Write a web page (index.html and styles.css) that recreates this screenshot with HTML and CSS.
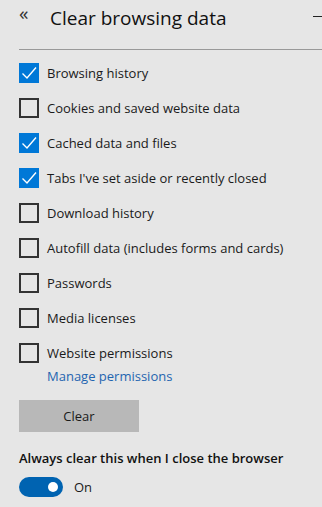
FILE: index.html
```html
<!DOCTYPE html>
<html>
<head>
<meta charset="utf-8">
<link rel="stylesheet" href="styles.css">
</head>
<body>
<div class="panel">
  <div class="header">
    <span class="back">«</span>
    <h1 class="title">Clear browsing data</h1>
    <span class="dash"></span>
  </div>
  <div class="list">
    <div class="row"><span class="box checked"><svg viewBox="0 0 20 20" width="20" height="20"><path d="M3.5 10.5 L8 15 L17 4.5" fill="none" stroke="#fff" stroke-width="1.4"/></svg></span><span class="label">Browsing history</span></div>
    <div class="row"><span class="box"></span><span class="label">Cookies and saved website data</span></div>
    <div class="row"><span class="box checked"><svg viewBox="0 0 20 20" width="20" height="20"><path d="M3.5 10.5 L8 15 L17 4.5" fill="none" stroke="#fff" stroke-width="1.4"/></svg></span><span class="label">Cached data and files</span></div>
    <div class="row"><span class="box checked"><svg viewBox="0 0 20 20" width="20" height="20"><path d="M3.5 10.5 L8 15 L17 4.5" fill="none" stroke="#fff" stroke-width="1.4"/></svg></span><span class="label">Tabs I've set aside or recently closed</span></div>
    <div class="row"><span class="box"></span><span class="label">Download history</span></div>
    <div class="row"><span class="box"></span><span class="label">Autofill data (includes forms and cards)</span></div>
    <div class="row"><span class="box"></span><span class="label">Passwords</span></div>
    <div class="row"><span class="box"></span><span class="label">Media licenses</span></div>
    <div class="row"><span class="box"></span><span class="label">Website permissions</span></div>
  </div>
  <a class="link">Manage permissions</a>
  <div class="btn">Clear</div>
  <div class="always">Always clear this when I close the browser</div>
  <div class="toggle-row"><span class="toggle"><span class="knob"></span></span><span class="on">On</span></div>
</div>
</body>
</html>
```
FILE: styles.css
```css
html, body {
  margin: 0;
  padding: 0;
  background: #e6e6e6;
  width: 322px;
  height: 507px;
  overflow: hidden;
}
.panel {
  font-family: "Open Sans", "Noto Sans", sans-serif;
  color: #1a1a1a;
}
.header {
  position: relative;
  height: 49px;
  margin-left: 19px;
  border-bottom: 1px solid #999;
  display: flex;
  align-items: flex-start;
}
.back {
  font-size: 19px;
  line-height: 19px;
  margin-top: 4px;
  width: 31px;
  color: #333;
}
.title {
  margin: 0;
  margin-top: 4px;
  font-weight: 400;
  font-size: 19px;
  line-height: 28px;
  color: #111;
}
.dash {
  position: absolute;
  right: 0;
  top: 16px;
  width: 9px;
  height: 1px;
  background: #222;
}
.list {
  display: flex;
  flex-direction: column;
  gap: 15px;
  padding: 13px 0 0 19px;
}
.row {
  display: flex;
  align-items: center;
  height: 20px;
}
.box {
  width: 20px;
  height: 20px;
  box-sizing: border-box;
  border: 2px solid #333;
  margin-right: 8px;
  flex: none;
}
.box.checked {
  border: none;
  background: #0078d7;
}
.box svg { display: block; }
.label {
  font-size: 13px;
  line-height: 20px;
  color: #1a1a1a;
}
.link {
  display: block;
  margin: 3px 0 0 47px;
  font-size: 13px;
  line-height: 20px;
  color: #1f65b0;
}
.btn {
  margin: 14px 0 0 19px;
  width: 120px;
  height: 32px;
  background: #b8b8b8;
  display: flex;
  align-items: center;
  justify-content: center;
  font-size: 13px;
  color: #1a1a1a;
}
.always {
  margin: 16px 0 0 19px;
  font-size: 13px;
  line-height: 20px;
  font-weight: 600;
  color: #111;
}
.toggle-row {
  display: flex;
  align-items: center;
  margin: 9px 0 0 19px;
}
.toggle {
  position: relative;
  width: 44px;
  height: 20px;
  border-radius: 10px;
  background: #0063b1;
  margin-right: 11px;
}
.knob {
  position: absolute;
  right: 5px;
  top: 5px;
  width: 10px;
  height: 10px;
  border-radius: 50%;
  background: #fff;
}
.on {
  font-size: 13px;
  color: #1a1a1a;
}
```
